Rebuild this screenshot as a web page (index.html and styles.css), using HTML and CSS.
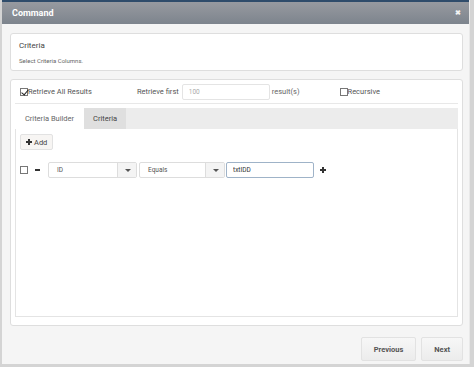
FILE: index.html
```html
<!DOCTYPE html>
<html lang="en">
<head>
    <meta charset="UTF-8">
    <title>Command</title>
    <link rel="stylesheet" href="styles.css">
</head>
<body>

    <div class="dialog">
        <div class="dialog-header">
            <span class="dialog-title">Command</span>
            <span class="dialog-close">&#10006;</span>
        </div>

        <div class="dialog-body">
            <div class="panel intro">
                <div class="intro-title">Criteria</div>
                <div class="intro-text">Select Criteria Columns.</div>
            </div>

            <div class="panel main">
                <div class="options">
                    <label class="check-label"><span class="check checked"></span>Retrieve All Results</label>
                    <span class="retrieve-label">Retrieve first</span>
                    <input class="count" type="text" placeholder="100" disabled>
                    <span class="results-label">result(s)</span>
                    <label class="check-label recursive"><span class="check"></span>Recursive</label>
                </div>

                <div class="tabs">
                    <div class="tab-bar">
                        <div class="tab active">Criteria Builder</div>
                        <div class="tab">Criteria</div>
                    </div>
                    <div class="tab-content">
                        <button class="add-btn"><span class="plus-icon"></span>Add</button>

                        <div class="criteria-row">
                            <span class="check"></span>
                            <span class="minus-icon"></span>
                            <div class="select field-id">
                                <span class="select-value">ID</span>
                                <span class="select-arrow"></span>
                            </div>
                            <div class="select field-op">
                                <span class="select-value">Equals</span>
                                <span class="select-arrow"></span>
                            </div>
                            <input class="value-input" type="text" value="txtIDD">
                            <span class="plus-icon row-plus"></span>
                        </div>
                    </div>
                </div>
            </div>
        </div>

        <div class="dialog-footer">
            <button class="footer-btn">Previous</button>
            <button class="footer-btn">Next</button>
        </div>
    </div>

</body>
</html>
```

FILE: styles.css
```css
* {
    box-sizing: border-box;
}
body {
    margin: 0;
    font-family: 'Roboto', 'Liberation Sans', sans-serif;
    background-color: #d4d4d4;
    width: 474px;
    height: 367px;
    overflow: hidden;
}
.dialog {
    width: 468px;
    height: 364px;
    margin-left: 2px;
    background-color: #f5f5f5;
    display: flex;
    flex-direction: column;
    border-right: 1px solid #e9e9e9;
}
.dialog-header {
    height: 24px;
    border-top: 2px solid #2f4c6b;
    background: linear-gradient(#979aa0, #7d848d);
    display: flex;
    align-items: center;
    justify-content: space-between;
    padding: 0 8px 0 10px;
    color: #fff;
}
.dialog-title {
    font-size: 9px;
    font-weight: bold;
}
.dialog-close {
    font-size: 7px;
    font-weight: bold;
    color: #f2f2f2;
}
.dialog-body {
    flex: 1;
    padding: 9px 6px 0 8px;
    display: flex;
    flex-direction: column;
}
.panel {
    background-color: #fff;
    border: 1px solid #dedede;
    border-radius: 3px;
}
.intro {
    height: 38px;
    padding: 7px 8px;
}
.intro-title {
    font-size: 8px;
    color: #444;
}
.intro-text {
    font-size: 6px;
    color: #666;
    margin-top: 7px;
}
.main {
    margin-top: 8px;
    flex: 1;
    display: flex;
    flex-direction: column;
    padding: 0 4px 8px 4px;
}
.options {
    height: 24px;
    display: flex;
    align-items: center;
    border-bottom: 1px solid #e8e8e8;
    font-size: 7.5px;
    color: #555;
    padding-left: 5px;
}
.check-label {
    display: flex;
    align-items: center;
}
.check {
    display: inline-block;
    width: 8px;
    height: 8px;
    border: 1px solid #777;
    background-color: #fff;
    position: relative;
}
.check.checked::after {
    content: "";
    position: absolute;
    left: 2px;
    top: -1px;
    width: 3px;
    height: 6px;
    border: solid #222;
    border-width: 0 1.5px 1.5px 0;
    transform: rotate(40deg);
}
.retrieve-label {
    margin-left: 45px;
}
.count {
    margin-left: 3px;
    width: 88px;
    height: 16px;
    border: 1px solid #e4e4e4;
    border-radius: 2px;
    background-color: #fff;
    font-family: inherit;
    font-size: 6.5px;
    padding: 0 6px;
}
.count::placeholder {
    color: #aaa;
}
.results-label {
    margin-left: 2px;
    color: #666;
}
.recursive {
    margin-left: 40px;
}
.tabs {
    margin-top: 4px;
    flex: 1;
    display: flex;
    flex-direction: column;
}
.tab-bar {
    height: 21px;
    display: flex;
    background-color: #ececec;
}
.tab {
    font-size: 7.5px;
    color: #444;
    padding: 0 9px;
    display: flex;
    align-items: center;
    background-color: #dfdfdf;
}
.tab.active {
    background-color: #fff;
    color: #666;
    width: 69px;
    justify-content: center;
    padding: 0;
}
.tab-content {
    flex: 1;
    background-color: #fff;
    border: 1px solid #e4e4e4;
    border-top: none;
    padding: 5px 4px;
}
.add-btn {
    display: flex;
    align-items: center;
    height: 16px;
    padding: 0 5px;
    border: 1px solid #e2e2e2;
    border-radius: 2px;
    background-color: #f7f5f3;
    font-family: inherit;
    font-size: 7.5px;
    color: #444;
}
.plus-icon {
    position: relative;
    display: inline-block;
    width: 6px;
    height: 6px;
    margin-right: 2px;
}
.plus-icon::before,
.plus-icon::after {
    content: "";
    position: absolute;
    background-color: #333;
}
.plus-icon::before {
    left: 0;
    top: 2px;
    width: 6px;
    height: 2px;
}
.plus-icon::after {
    left: 2px;
    top: 0;
    width: 2px;
    height: 6px;
}
.criteria-row {
    display: flex;
    align-items: center;
    margin-top: 11px;
    height: 17px;
}
.minus-icon {
    display: inline-block;
    width: 5px;
    height: 2px;
    background-color: #333;
    margin-left: 7px;
}
.select {
    display: flex;
    height: 16px;
    border: 1px solid #ddd;
    border-radius: 2px;
    font-size: 6.5px;
    color: #555;
}
.field-id {
    margin-left: 8px;
    width: 89px;
}
.field-op {
    margin-left: 2px;
    width: 86px;
}
.select-value {
    flex: 1;
    display: flex;
    align-items: center;
    padding-left: 8px;
}
.select-arrow {
    width: 19px;
    border-left: 1px solid #ddd;
    background-color: #f4f4f4;
    position: relative;
}
.select-arrow::after {
    content: "";
    position: absolute;
    left: 7px;
    top: 6px;
    border-left: 3px solid transparent;
    border-right: 3px solid transparent;
    border-top: 3px solid #555;
}
.value-input {
    margin-left: 1px;
    width: 88px;
    height: 16px;
    border: 1px solid #9fb3c8;
    border-radius: 2px;
    font-family: inherit;
    font-size: 6.5px;
    color: #333;
    padding: 0 6px;
}
.row-plus {
    margin-left: 6px;
}
.dialog-footer {
    height: 38px;
    display: flex;
    justify-content: flex-end;
    align-items: flex-end;
    gap: 5px;
    padding: 0 6px 3px 0;
}
.footer-btn {
    height: 24px;
    padding: 0 12px;
    border: 1px solid #e2e2e2;
    border-radius: 2px;
    background: linear-gradient(#f7f7f7, #ececec);
    font-family: inherit;
    font-size: 7.5px;
    font-weight: bold;
    color: #555;
}
```
